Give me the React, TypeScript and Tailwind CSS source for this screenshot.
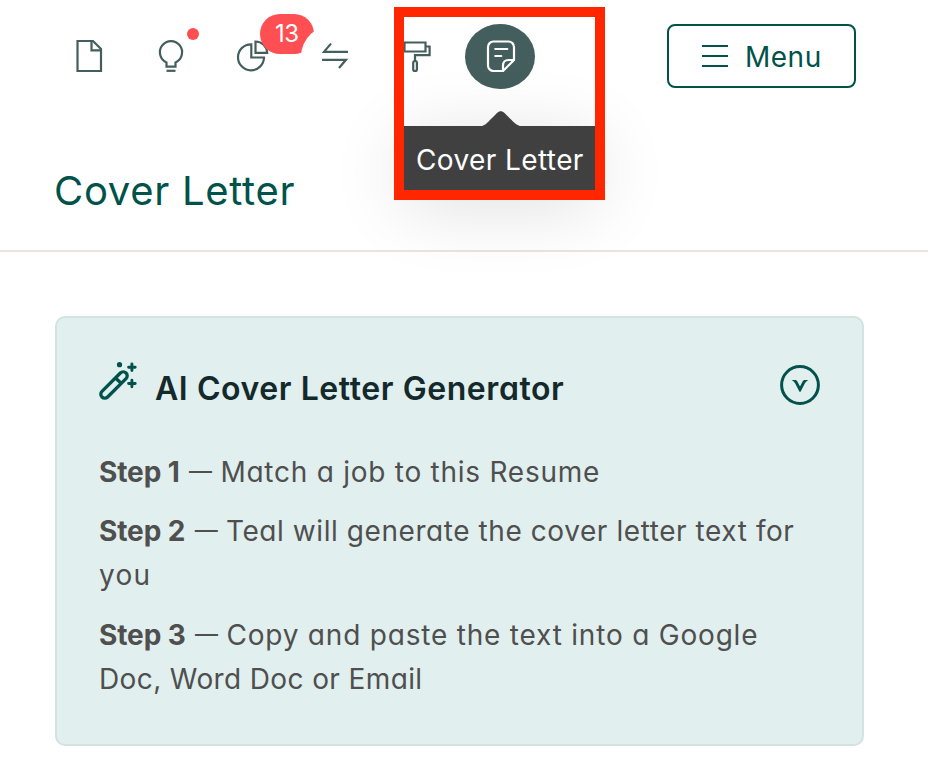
import type { ReactNode } from "react";

const steps = [
  {
    label: "Step 1",
    lines: [{ text: "Match a job to this Resume", tracking: "tracking-[0.75px]" }],
  },
  {
    label: "Step 2",
    lines: [
      { text: "Teal will generate the cover letter text for", tracking: "tracking-[0.57px]" },
      { text: "you", tracking: "tracking-[1.2px]" },
    ],
  },
  {
    label: "Step 3",
    lines: [
      { text: "Copy and paste the text into a Google", tracking: "tracking-[0.8px]" },
      { text: "Doc, Word Doc or Email", tracking: "tracking-[0.38px]" },
    ],
  },
];

function NavButton({
  label,
  active = false,
  icon,
  children,
}: {
  label: string;
  active?: boolean;
  icon: ReactNode;
  children?: ReactNode;
}) {
  return (
    <button
      aria-label={label}
      className={`relative h-[65px] w-[70px] shrink-0 rounded-[50%] ${
        active ? "bg-[#445e5d] text-white" : "bg-white text-[#445e5d]"
      }`}
    >
      <svg viewBox="0 0 70 65" className="h-[65px] w-[70px]" fill="none" stroke="currentColor" strokeWidth="2.2">
        {icon}
      </svg>
      {children}
    </button>
  );
}

function Toolbar() {
  return (
    <nav className="flex gap-3">
      <NavButton
        label="Resume"
        icon={
          <>
            <path d="M22.5 17H38l8 8v22H22.5z" />
            <path d="M36.5 17v9.3H46" />
          </>
        }
      />
      <NavButton
        label="Tips"
        icon={
          <>
            <path d="M29.5 42.6v-4.2a11.1 11.1 0 1 1 9 0v4.2z" />
            <path d="M29.5 46.8h9" />
          </>
        }
      >
        <span className="absolute left-[50px] top-1 size-3 rounded-full bg-[#ff4f52]" />
      </NavButton>
      <NavButton
        label="Analysis"
        icon={
          <>
            <path d="M32.3 20.3a13 13 0 1 0 12.7 13.2H32.3z" />
            <path d="M36.5 17.5v11.3h11.7A11.7 11.7 0 0 0 36.5 17.5z" />
          </>
        }
      >
        <span className="absolute left-[41px] top-[-10px] flex h-10 w-[54px] items-center rounded-full bg-[#ff4f52] pl-[15px] text-[24px] leading-none tracking-[-0.6px] text-white">
          13
        </span>
      </NavButton>
      <NavButton label="Match" icon={<path d="M47 27.8H23l7-8.2M21 35.8h24l-7 8.2" />} />
      <NavButton
        label="Design"
        icon={
          <>
            <path d="M21.5 18.5h21v9h-21zM43 22.5h3.6v8.6H32v6" />
            <rect x="30.2" y="37" width="3.7" height="10" rx="1.8" />
          </>
        }
      />
      <NavButton
        label="Cover Letter"
        active
        icon={
          <g strokeLinecap="round" strokeLinejoin="round">
            <path d="M49 36V23a5.5 5.5 0 0 0-5.5-5.5h-15A5.5 5.5 0 0 0 23 23v18.5a5.5 5.5 0 0 0 5.5 5.5H38z" />
            <path d="M38 47v-5.5c0-3 2-5.5 5.5-5.5H49" />
            <path d="M30.3 25h12M30.3 32h6" />
          </g>
        }
      />
    </nav>
  );
}

function MenuButton() {
  return (
    <button className="ml-[132px] flex h-16 w-[189px] items-center rounded-lg border-2 border-[#00524b] pl-[33px] text-[#00524b]">
      <svg viewBox="0 0 26 22" className="h-[22px] w-[26px]" stroke="currentColor" strokeWidth="2.2">
        <path d="M0 1h26M0 11h26M0 21h26" />
      </svg>
      <span className="ml-[17px] mt-[2px] text-[28px] leading-none tracking-[0.5px]">Menu</span>
    </button>
  );
}

function Tooltip() {
  return (
    <div className="absolute left-[404px] top-[126px] h-16 w-[191px] bg-[#404040] text-white shadow-[0_14px_76px_rgba(0,0,0,0.14)]">
      <svg viewBox="0 0 40 16" className="absolute -top-[15px] left-[77px] h-4 w-10" fill="#404040">
        <path d="M0 15.5C5 14 7 11 10 8l6-6c2.5-2.5 5-2.5 7.5 0l6 6c3 3 5.5 6 10.5 7.5z" />
      </svg>
      <span className="block whitespace-nowrap pl-3 pt-[21px] text-[28px] leading-[27px] tracking-[0.4px]">
        Cover Letter
      </span>
    </div>
  );
}

function WandIcon() {
  return (
    <svg viewBox="0 0 40 40" className="size-10 text-[#00524b]" fill="none" stroke="currentColor" strokeWidth="3.3">
      <rect x="-17" y="-4" width="34" height="8" rx="4" transform="translate(15 25) rotate(-45)" />
      <path d="M17 18.5l5.5 5" />
      <circle cx="20.5" cy="4.7" r="2.6" fill="currentColor" stroke="none" />
      <path d="M32.9 4v6.5M29.6 7.2h6.6M32.9 20.3v6.5M29.6 23.5h6.6" strokeWidth="2.9" strokeLinecap="round" />
    </svg>
  );
}

function GeneratorCard() {
  return (
    <section className="ml-[55px] mt-16 h-[430px] w-[809px] rounded-[10px] border-2 border-[#d3e3e1] bg-[#e1efee] pl-[42px] pt-[42px]">
      <div className="flex h-[50px]">
        <WandIcon />
        <h2 className="ml-4 mt-[9px] w-[625px] whitespace-nowrap text-[32px] font-semibold leading-[40px] tracking-[0.57px] text-[#14292b]">
          AI Cover Letter Generator
        </h2>
        <svg viewBox="0 0 40 40" className="mt-[5px] size-10 text-[#00524b]">
          <circle cx="20" cy="20" r="18.4" fill="none" stroke="currentColor" strokeWidth="3" />
          <path
            d="M11.5 15h3.5c1.2 0 1.8.5 2.4 1.5l2.6 5 2.6-5c.6-1 1.2-1.5 2.400-1.500h3.500c-1.800.8-2.800 2-3.700 3.500l-4 7.700q-.8 1.400-1.600 0l-4-7.700c-.9-1.500-1.900-2.700-3.700-3.500z"
            fill="currentColor"
          />
        </svg>
      </div>
      <div className="mt-10 flex flex-col gap-[15px] text-[28px] leading-[44.2px] text-[#4f4f4f]">
        {steps.map((step) => (
          <p key={step.label}>
            {step.lines.map((line, i) => (
              <span key={line.text} className={`block whitespace-nowrap ${line.tracking}`}>
                {i === 0 && (
                  <>
                    <strong className="font-bold tracking-[-0.1px]">{step.label}</strong>
                    <span className="ml-0.5 align-[3px] text-[23px] leading-none tracking-[0.9px]"> — </span>
                  </>
                )}
                {line.text}
              </span>
            ))}
          </p>
        ))}
      </div>
    </section>
  );
}

export default function App() {
  return (
    <main className="relative h-[784px] w-[928px] overflow-hidden bg-white font-['Inter',sans-serif] [font-feature-settings:'cv11']">
      <header className="h-[252px] border-b-2 border-[#eae4dc] pt-6">
        <div className="flex h-[65px] pl-[55px]">
          <Toolbar />
          <MenuButton />
        </div>
        <h1 className="ml-[54px] mt-[77px] text-[40px] leading-[50px] tracking-[0.7px] text-[#00524b]">Cover Letter</h1>
      </header>
      <GeneratorCard />
      <Tooltip />
      <div className="absolute left-[394px] top-[7px] h-[193px] w-[211px] border-10 border-[#ff2600]" />
    </main>
  );
}
